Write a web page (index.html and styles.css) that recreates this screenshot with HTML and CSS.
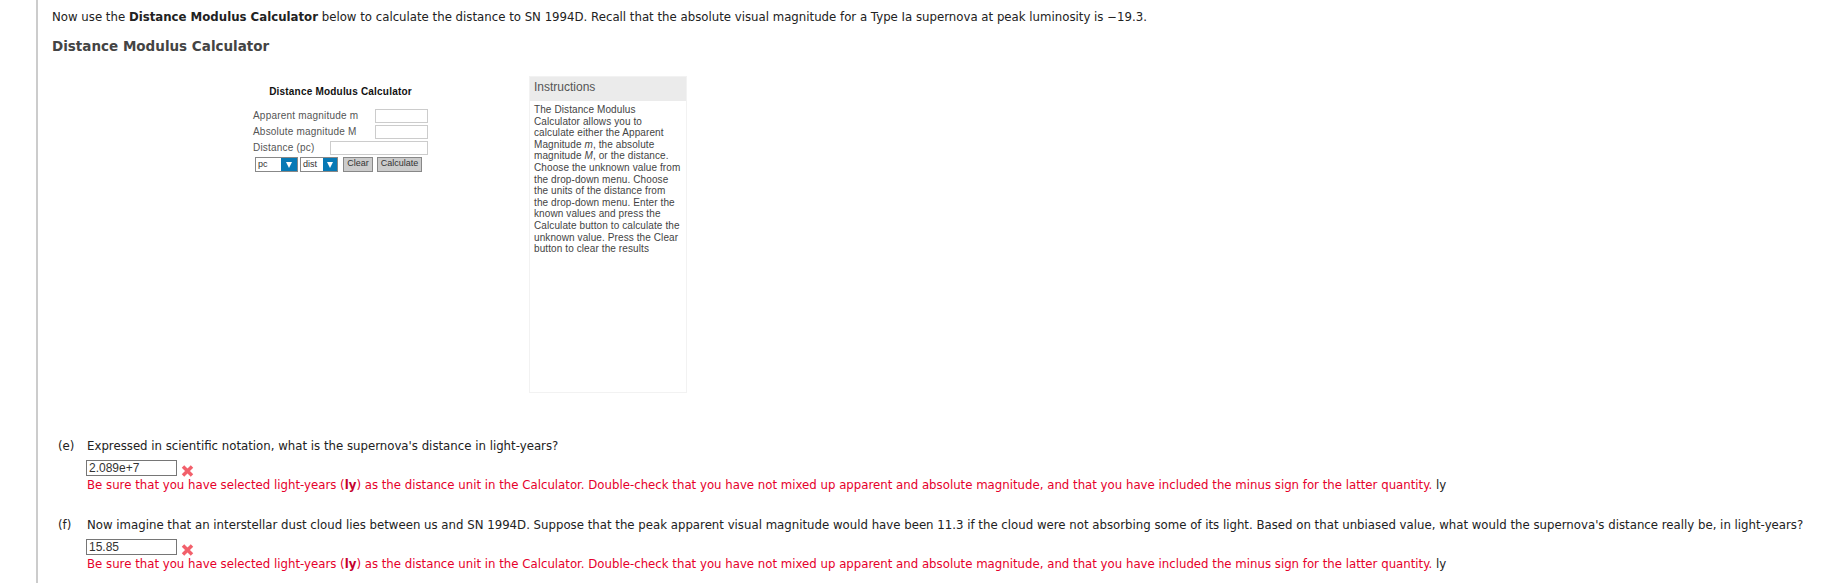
FILE: index.html
```html
<!DOCTYPE html>
<html lang="en">
<head>
    <meta charset="UTF-8">
    <meta name="viewport" content="width=device-width, initial-scale=1.0">
    <title>Distance Modulus Calculator</title>
    <link rel="stylesheet" href="styles.css">
</head>
<body>
    <div class="content">
        <p class="intro">Now use the <b>Distance Modulus Calculator</b> below to calculate the distance to SN 1994D. Recall that the absolute visual magnitude for a Type Ia supernova at peak luminosity is &minus;19.3.</p>
        <h2>Distance Modulus Calculator</h2>

        <div class="tool">
            <div class="calc">
                <h3>Distance Modulus Calculator</h3>
                <div class="calc-row"><label>Apparent magnitude m</label><input type="text" class="short"></div>
                <div class="calc-row"><label>Absolute magnitude M</label><input type="text" class="short"></div>
                <div class="calc-row"><label>Distance (pc)</label><input type="text" class="long"></div>
                <div class="calc-controls">
                    <div class="dropdown pc"><span>pc</span><i></i></div>
                    <div class="dropdown dist"><span>dist</span><i></i></div>
                    <button class="clear">Clear</button>
                    <button class="calculate">Calculate</button>
                </div>
            </div>
            <div class="instructions">
                <div class="instructions-title">Instructions</div>
                <p>The Distance Modulus<br>
                Calculator allows you to<br>
                calculate either the Apparent<br>
                Magnitude <em>m</em>, the absolute<br>
                magnitude <em>M</em>, or the distance.<br>
                Choose the unknown value from<br>
                the drop-down menu. Choose<br>
                the units of the distance from<br>
                the drop-down menu. Enter the<br>
                known values and press the<br>
                Calculate button to calculate the<br>
                unknown value. Press the Clear<br>
                button to clear the results</p>
            </div>
        </div>

        <div class="question first">
            <span class="letter">(e)</span>
            <div class="body">
                <div class="prompt">Expressed in scientific notation, what is the supernova's distance in light-years?</div>
                <div class="answer">
                    <input type="text" value="2.089e+7">
                    <svg class="wrong" viewBox="0 0 13 12" width="13" height="12"><path d="M2 1.5 L11 10.5 M11 1.5 L2 10.5"/></svg>
                </div>
                <div class="feedback"><span class="hint">Be sure that you have selected light-years (<b>ly</b>) as the distance unit in the Calculator. Double-check that you have not mixed up apparent and absolute magnitude, and that you have included the minus sign for the latter quantity.</span> ly</div>
            </div>
        </div>

        <div class="question">
            <span class="letter">(f)</span>
            <div class="body">
                <div class="prompt">Now imagine that an interstellar dust cloud lies between us and SN 1994D. Suppose that the peak apparent visual magnitude would have been 11.3 if the cloud were not absorbing some of its light. Based on that unbiased value, what would the supernova's distance really be, in light-years?</div>
                <div class="answer">
                    <input type="text" value="15.85">
                    <svg class="wrong" viewBox="0 0 13 12" width="13" height="12"><path d="M2 1.5 L11 10.5 M11 1.5 L2 10.5"/></svg>
                </div>
                <div class="feedback"><span class="hint">Be sure that you have selected light-years (<b>ly</b>) as the distance unit in the Calculator. Double-check that you have not mixed up apparent and absolute magnitude, and that you have included the minus sign for the latter quantity.</span> ly</div>
            </div>
        </div>
    </div>
</body>
</html>
```

FILE: styles.css
```css
html, body {
    margin: 0;
    padding: 0;
    background: #fff;
    overflow: hidden;
}
body {
    font-family: "DejaVu Sans", Verdana, sans-serif;
    font-size: 11.75px;
    line-height: 16px;
    color: #222;
}
.content {
    margin-left: 36px;
    height: 583px;
    box-sizing: border-box;
    border-left: 2px solid #ccc;
    padding: 9px 0 0 14px;
}
.intro {
    margin: 0;
    white-space: nowrap;
}
h2 {
    margin: 11px 0 0;
    font-size: 13.5px;
    line-height: 20px;
    font-weight: 700;
    color: #444;
}
.tool {
    display: flex;
    margin: 20px 0 0 201px;
}
.calc {
    width: 175px;
    margin-right: 101px;
    font-family: "Liberation Sans", Arial, sans-serif;
    font-size: 10px;
    color: #555;
}
.calc h3 {
    margin: 10px 0;
    font-size: 10px;
    line-height: 12px;
    font-weight: 700;
    text-align: center;
    color: #111;
    letter-spacing: 0.2px;
}
.calc-row {
    display: flex;
    justify-content: space-between;
    align-items: center;
    height: 16px;
    letter-spacing: 0.2px;
}
.calc-row input {
    box-sizing: border-box;
    height: 14px;
    padding: 0;
    border: 1px solid #ccc;
    background: #fff;
}
.short {
    width: 53px;
}
.long {
    width: 98px;
}
.calc-controls {
    display: flex;
    margin: 1px 0 0 2px;
}
.dropdown {
    display: flex;
    box-sizing: border-box;
    height: 15px;
    border: 1px solid #888;
    font-size: 9px;
    line-height: 12px;
    color: #333;
}
.dropdown span {
    flex: 1;
    padding-left: 2px;
}
.dropdown i {
    display: flex;
    align-items: center;
    justify-content: center;
    background: #0779b5;
}
.dropdown i::after {
    content: "";
    border-left: 3.5px solid transparent;
    border-right: 3.5px solid transparent;
    border-top: 6px solid #fff;
}
.pc {
    width: 43px;
    margin-right: 2px;
}
.pc i {
    width: 16px;
}
.dist {
    width: 38px;
    margin-right: 5px;
}
.dist i {
    width: 14px;
}
.calc-controls button {
    box-sizing: border-box;
    height: 15px;
    padding: 0 0 2px;
    border: 1px solid #888;
    background: #ccc;
    font-family: "Liberation Sans", Arial, sans-serif;
    font-size: 9px;
    line-height: 11px;
    color: #333;
}
.clear {
    width: 30px;
    margin-right: 4px;
}
.calculate {
    width: 45px;
}
.instructions {
    box-sizing: border-box;
    width: 158px;
    height: 317px;
    border: 1px solid #f2f2f2;
    font-family: "Liberation Sans", Arial, sans-serif;
}
.instructions-title {
    height: 24px;
    padding-left: 4px;
    background: #ebebeb;
    font-size: 12px;
    line-height: 20px;
    color: #555;
}
.instructions p {
    margin: 3px 0 0;
    padding: 0 0 0 4px;
    font-size: 10px;
    line-height: 11.6px;
    letter-spacing: 0.1px;
    white-space: nowrap;
    color: #444;
}
.question {
    display: flex;
    margin-top: 24px;
}
.question.first {
    margin-top: 45px;
}
.letter {
    width: 29px;
    margin-left: 6px;
}
.body {
    white-space: nowrap;
}
.answer {
    display: flex;
    height: 17px;
    margin-top: 6px;
}
.answer input {
    box-sizing: border-box;
    width: 91px;
    height: 16px;
    margin: 0 0 0 -1px;
    padding: 0 2px;
    border: 1px solid #767676;
    font-family: "Liberation Sans", Arial, sans-serif;
    font-size: 12px;
    color: #333;
}
.wrong {
    margin: 5px 0 0 4px;
}
.wrong path {
    fill: none;
    stroke: #f2606b;
    stroke-width: 3.5;
}
.hint {
    color: #e6002b;
}
.hint b {
    color: #c4002b;
}
```
